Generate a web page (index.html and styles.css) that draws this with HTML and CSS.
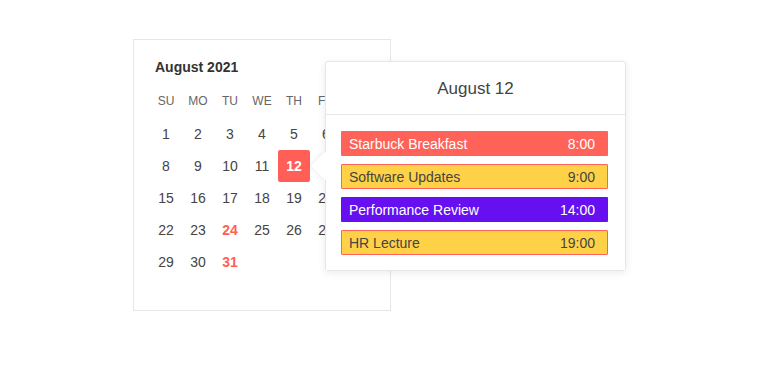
FILE: index.html
```html
<!DOCTYPE html>
<html lang="en">
<head>
    <meta charset="UTF-8">
    <meta name="viewport" content="width=device-width, initial-scale=1.0">
    <title>Calendar</title>
    <link rel="stylesheet" href="styles.css">
</head>
<body>
    <div class="stage">
        <div class="calendar">
            <div class="cal-title">August 2021</div>
            <div class="cal-grid">
                <div class="wd">SU</div><div class="wd">MO</div><div class="wd">TU</div><div class="wd">WE</div><div class="wd">TH</div><div class="wd">FR</div><div class="wd">SA</div>
                <div class="day">1</div><div class="day">2</div><div class="day">3</div><div class="day">4</div><div class="day">5</div><div class="day">6</div><div class="day">7</div>
                <div class="day">8</div><div class="day">9</div><div class="day">10</div><div class="day">11</div><div class="day selected">12</div><div class="day">13</div><div class="day">14</div>
                <div class="day">15</div><div class="day">16</div><div class="day">17</div><div class="day">18</div><div class="day">19</div><div class="day">20</div><div class="day">21</div>
                <div class="day">22</div><div class="day">23</div><div class="day marked">24</div><div class="day">25</div><div class="day">26</div><div class="day">27</div><div class="day">28</div>
                <div class="day">29</div><div class="day">30</div><div class="day marked">31</div>
            </div>
        </div>

        <div class="popover">
            <span class="arrow"></span>
            <div class="pop-header">August 12</div>
            <div class="pop-body">
                <div class="event red"><span>Starbuck Breakfast</span><span>8:00</span></div>
                <div class="event yellow"><span>Software Updates</span><span>9:00</span></div>
                <div class="event purple"><span>Performance Review</span><span>14:00</span></div>
                <div class="event yellow"><span>HR Lecture</span><span>19:00</span></div>
            </div>
        </div>
    </div>
</body>
</html>
```

FILE: styles.css
```css
body {
    font-family: 'Liberation Sans', Arial, sans-serif;
    background-color: #fff;
    margin: 0;
    color: #444;
}
.stage {
    position: relative;
    margin: 39px 0 0 133px;
    width: 500px;
}
.calendar {
    width: 224px;
    height: 238px;
    padding: 16px;
    border: 1px solid #e6e6e6;
    background-color: #fff;
}
.cal-title {
    font-size: 14px;
    font-weight: bold;
    color: #333;
    line-height: 22px;
    padding-left: 5px;
    margin-bottom: 7px;
}
.cal-grid {
    display: grid;
    grid-template-columns: repeat(7, 32px);
    grid-template-rows: 33px;
    grid-auto-rows: 32px;
}
.wd {
    font-size: 12px;
    color: #666;
    display: flex;
    align-items: center;
    justify-content: center;
    padding-bottom: 1px;
}
.day {
    font-size: 14px;
    color: #444;
    display: flex;
    align-items: center;
    justify-content: center;
}
.day.selected {
    background-color: #ff5f56;
    color: #fff;
    font-weight: bold;
    border-radius: 2px;
}
.day.marked {
    color: #ff5f56;
    font-weight: bold;
}
.popover {
    position: absolute;
    left: 192px;
    top: 22px;
    width: 299px;
    background-color: #fff;
    border: 1px solid #e6e6e6;
    border-radius: 3px;
    box-shadow: 0 2px 8px rgba(0, 0, 0, 0.08);
}
.arrow {
    position: absolute;
    left: -11px;
    top: 94px;
    width: 20px;
    height: 20px;
    background-color: #fff;
    transform: rotate(45deg);
    box-shadow: -2px 2px 4px rgba(0, 0, 0, 0.05);
}
.pop-header {
    position: relative;
    background-color: #fff;
    border-radius: 3px 3px 0 0;
    height: 52px;
    line-height: 54px;
    text-align: center;
    font-size: 17px;
    color: #444;
    border-bottom: 1px solid #e6e6e6;
}
.pop-body {
    position: relative;
    background-color: #fff;
    padding: 16px 17px 15px 15px;
    display: flex;
    flex-direction: column;
    gap: 8px;
}
.event {
    height: 25px;
    box-sizing: border-box;
    display: flex;
    justify-content: space-between;
    align-items: center;
    padding: 1px 13px 0 8px;
    font-size: 14px;
    border-radius: 1px;
}
.event.red {
    background-color: #ff6259;
    color: #fff;
}
.event.yellow {
    background-color: #ffd147;
    border: 1px solid #ff6259;
    padding-left: 7px;
    padding-right: 12px;
    color: #444;
}
.event.purple {
    background-color: #6610f2;
    color: #fff;
}
```
